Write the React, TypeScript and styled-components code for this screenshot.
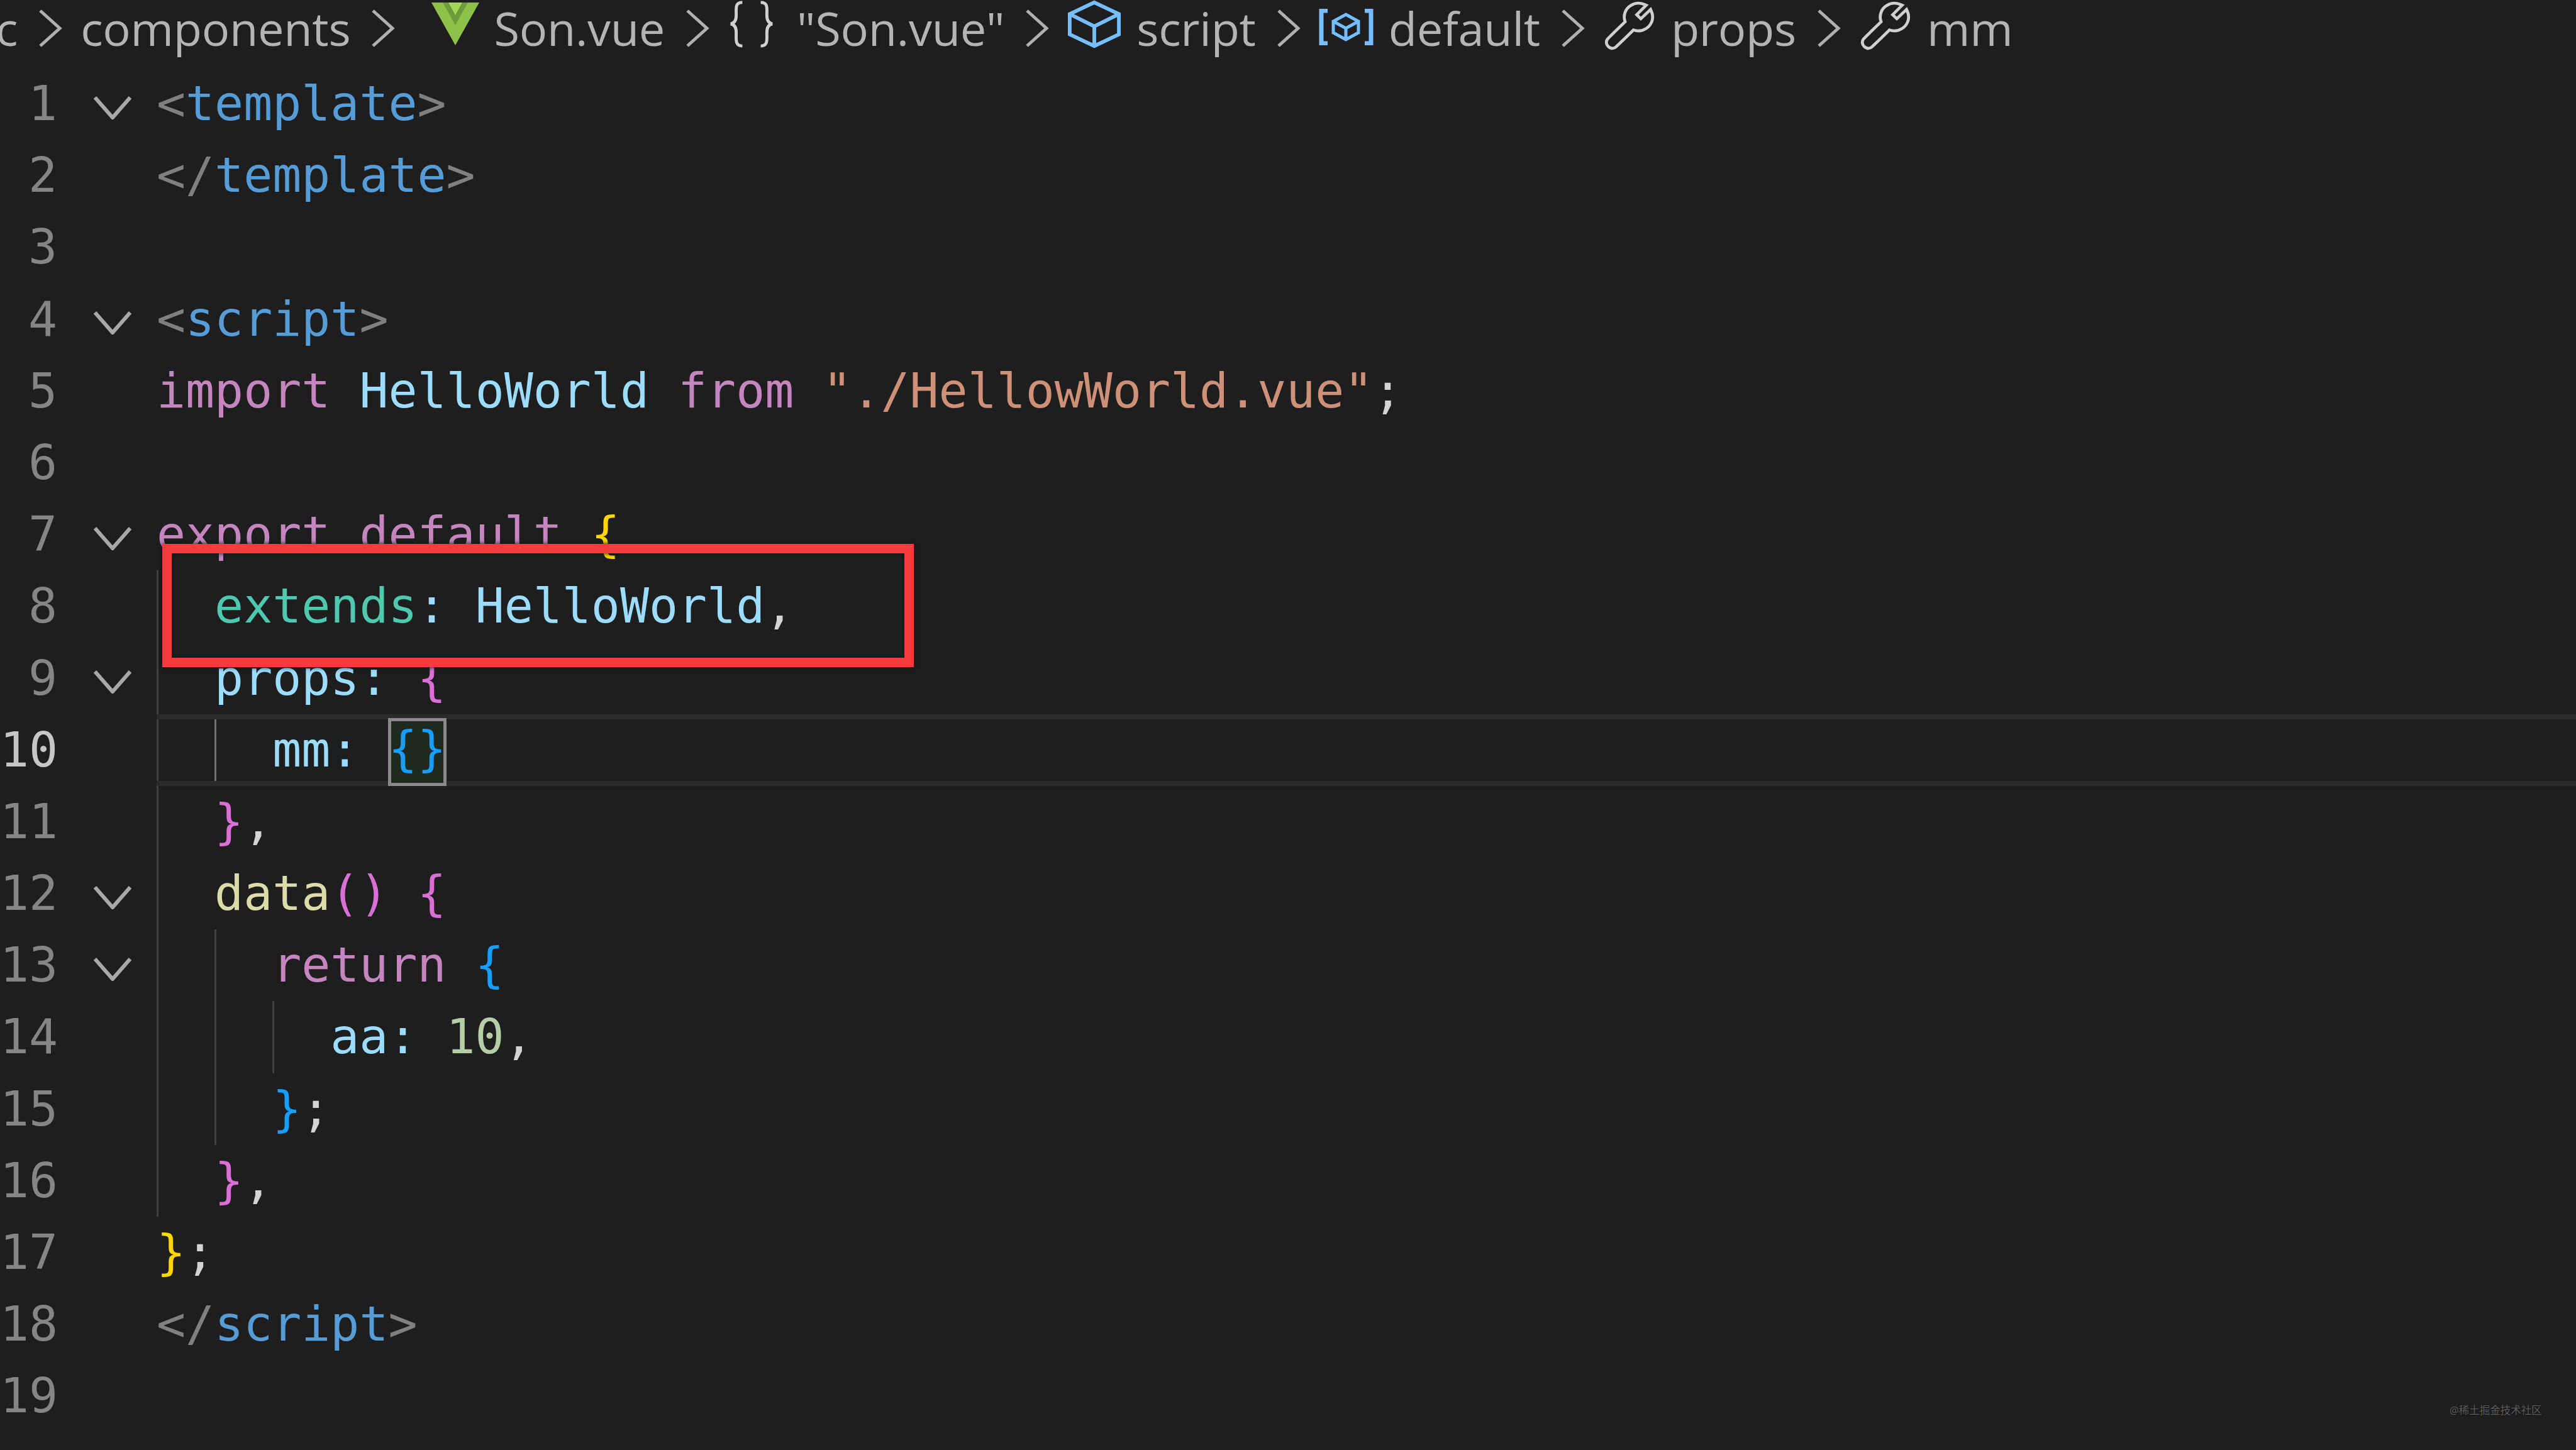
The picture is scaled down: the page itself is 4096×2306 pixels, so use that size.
import React from 'react';
import styled, { createGlobalStyle } from 'styled-components';

const GlobalStyle = createGlobalStyle`
  html, body {
    margin: 0;
    padding: 0;
    background: #1e1e1e;
  }
`;

type Token = { text: string; color: string };

type Line = {
  guides?: number;
  fold?: boolean;
  active?: boolean;
  tokens: Token[];
};

const PUNCT = '#808080';
const TAG = '#569cd6';
const KEYWORD = '#c586c0';
const VARIABLE = '#9cdcfe';
const PLAIN = '#d4d4d4';
const YELLOW = '#ffd700';
const PINK = '#da70d6';
const BLUE = '#179fff';

const t = (text: string, color: string): Token => ({ text, color });

const LINES: Line[] = [
  { fold: true, tokens: [t('<', PUNCT), t('template', TAG), t('>', PUNCT)] },
  { tokens: [t('</', PUNCT), t('template', TAG), t('>', PUNCT)] },
  { tokens: [] },
  { fold: true, tokens: [t('<', PUNCT), t('script', TAG), t('>', PUNCT)] },
  {
    tokens: [
      t('import ', KEYWORD),
      t('HelloWorld ', VARIABLE),
      t('from ', KEYWORD),
      t('"./HellowWorld.vue"', '#ce9178'),
      t(';', PLAIN),
    ],
  },
  { tokens: [] },
  { fold: true, tokens: [t('export default ', KEYWORD), t('{', YELLOW)] },
  { guides: 1, tokens: [t('extends', '#4ec9b0'), t(': ', VARIABLE), t('HelloWorld', VARIABLE), t(',', PLAIN)] },
  { guides: 1, fold: true, tokens: [t('props', VARIABLE), t(': ', VARIABLE), t('{', PINK)] },
  { guides: 2, active: true, tokens: [t('mm', VARIABLE), t(': ', VARIABLE)] },
  { guides: 1, tokens: [t('}', PINK), t(',', PLAIN)] },
  { guides: 1, fold: true, tokens: [t('data', '#dcdcaa'), t('() ', PINK), t('{', PINK)] },
  { guides: 2, fold: true, tokens: [t('return ', KEYWORD), t('{', BLUE)] },
  { guides: 3, tokens: [t('aa', VARIABLE), t(': ', VARIABLE), t('10', '#b5cea8'), t(',', PLAIN)] },
  { guides: 2, tokens: [t('}', BLUE), t(';', PLAIN)] },
  { guides: 1, tokens: [t('}', PINK), t(',', PLAIN)] },
  { tokens: [t('}', YELLOW), t(';', PLAIN)] },
  { tokens: [t('</', PUNCT), t('script', TAG), t('>', PUNCT)] },
  { tokens: [] },
];

const Separator = () => (
  <SeparatorIcon viewBox="0 0 40 60">
    <path d="M4 2 L35 30 L4 58" fill="none" stroke="#b0b0b0" strokeWidth="5" />
  </SeparatorIcon>
);

const VueLogo = () => (
  <VueIcon viewBox="0 0 76 68" preserveAspectRatio="none">
    <path d="M0 0 H76 L38 68 Z" fill="#8dc149" />
    <path d="M18 0 H58 L38 36 Z" fill="#6d9a3a" />
    <path d="M27 0 H49 L38 20 Z" fill="#a4d65c" />
  </VueIcon>
);

const BracesIcon = () => (
  <CrumbIcon $width={76} $height={77} $lift={13} $gap={34} viewBox="0 0 78 77">
    <path
      d="M24 3 C12 3 14 12 14 24 C14 33 11 37 5 38 C11 39 14 43 14 52 C14 64 12 74 24 74 M54 3 C66 3 64 12 64 24 C64 33 67 37 73 38 C67 39 64 43 64 52 C64 64 66 74 54 74"
      fill="none"
      stroke="#d0d0d0"
      strokeWidth="5"
    />
  </CrumbIcon>
);

const CubeIcon = () => (
  <CrumbIcon $width={86} $height={77} $lift={13} $gap={24} viewBox="0 0 88 77">
    <path
      d="M44 3 L84 22 V55 L44 74 L4 55 V22 Z M4 22 L44 42 L84 22 M44 42 V74"
      fill="none"
      stroke="#75beff"
      strokeWidth="6"
    />
  </CrumbIcon>
);

const VariableIcon = () => (
  <CrumbIcon $width={87} $height={58} $lift={4} $gap={24} viewBox="0 0 87 58">
    <path d="M14 3 H4 V55 H14 M73 3 H83 V55 H73" fill="none" stroke="#75beff" strokeWidth="7" />
    <path d="M43 9 L63 20 V38 L43 49 L23 38 V20 Z M23 20 L43 31 L63 20 M43 31 V49" fill="none" stroke="#75beff" strokeWidth="5" />
  </CrumbIcon>
);

const WrenchIcon = () => (
  <CrumbIcon $width={84} $height={82} $lift={8} $gap={24} viewBox="0 0 16 16" preserveAspectRatio="none">
    <path
      d="M2.807 14.975a1.75 1.75 0 0 1-1.255-.556 1.684 1.684 0 0 1-.544-1.1A1.72 1.72 0 0 1 1.36 12.1c1.208-1.27 3.587-3.65 5.318-5.345a4.257 4.257 0 0 1 .048-3.078 4.095 4.095 0 0 1 1.665-1.969 4.259 4.259 0 0 1 4.04-.36l.617.268-2.866 2.951 1.255 1.259 2.944-2.877.267.619a4.295 4.295 0 0 1 .04 3.311 4.198 4.198 0 0 1-.923 1.392 4.27 4.27 0 0 1-.743.581 4.217 4.217 0 0 1-3.812.446c-1.098 1.112-3.84 3.872-5.32 5.254a1.63 1.63 0 0 1-1.09.464z"
      fill="none"
      stroke="#d0d0d0"
      strokeWidth="0.9"
    />
  </CrumbIcon>
);

const Chevron = () => (
  <ChevronIcon viewBox="0 0 62 37">
    <path d="M3 2 L31 34 L59 2" fill="none" stroke="#a8a8a8" strokeWidth="6" />
  </ChevronIcon>
);

const App = () => {
  return (
    <Screen>
      <GlobalStyle />
      <Breadcrumbs>
        <Crumb>c</Crumb>
        <Separator />
        <Crumb>components</Crumb>
        <Separator />
        <VueLogo />
        <Crumb>Son.vue</Crumb>
        <Separator />
        <BracesIcon />
        <Crumb>"Son.vue"</Crumb>
        <Separator />
        <CubeIcon />
        <Crumb>script</Crumb>
        <Separator />
        <VariableIcon />
        <Crumb>default</Crumb>
        <Separator />
        <WrenchIcon />
        <Crumb>props</Crumb>
        <Separator />
        <WrenchIcon />
        <Crumb>mm</Crumb>
      </Breadcrumbs>
      <Editor>
        {LINES.map((line, i) => (
          <Row key={i}>
            <LineNumber $active={!!line.active}>{i + 1}</LineNumber>
            <FoldSlot>{line.fold && <Chevron />}</FoldSlot>
            <Code $active={!!line.active}>
              {Array.from({ length: line.guides ?? 0 }).map((_, g) => (
                <Guide key={g} $bright={!!line.active && g === 1} />
              ))}
              <CodeText>
                {line.tokens.map((token, k) => (
                  <Tok key={k} $color={token.color}>
                    {token.text}
                  </Tok>
                ))}
                {line.active && <MatchedBraces>{'{}'}</MatchedBraces>}
              </CodeText>
            </Code>
          </Row>
        ))}
      </Editor>
      <RedBox />
      <Watermark>@稀土掘金技术社区</Watermark>
    </Screen>
  );
};

export default App;

const Screen = styled.div`
  position: relative;
  width: 4096px;
  height: 2306px;
  overflow: hidden;
  background: #1e1e1e;
`;

const Breadcrumbs = styled.div`
  display: flex;
  align-items: center;
  height: 90px;
  margin-left: -7px;
  padding-bottom: 18px;
  font-family: 'Open Sans', 'Noto Sans', sans-serif;
  font-size: 74px;
  color: #b4b4b4;
`;

const Crumb = styled.span`
  line-height: 90px;
  white-space: pre;
  letter-spacing: -0.3px;
`;

const SeparatorIcon = styled.svg`
  flex: none;
  width: 40px;
  height: 60px;
  margin: 0 28px 0 32px;
`;

const VueIcon = styled.svg`
  flex: none;
  width: 76px;
  height: 68px;
  margin: -14px 23px 0 29px;
`;

const CrumbIcon = styled.svg<{ $width: number; $height: number; $lift: number; $gap: number }>`
  flex: none;
  width: ${(p) => p.$width}px;
  height: ${(p) => p.$height}px;
  margin-top: ${(p) => -p.$lift}px;
  margin-right: ${(p) => p.$gap}px;
`;

const Editor = styled.div`
  display: flex;
  flex-direction: column;
`;

const Row = styled.div`
  display: flex;
  height: 114.2px;
  font-family: 'DejaVu Sans Mono', 'Liberation Mono', monospace;
  font-size: 76.5px;
  line-height: 114.2px;
`;

const LineNumber = styled.div<{ $active: boolean }>`
  flex: none;
  width: 91px;
  text-align: right;
  color: ${(p) => (p.$active ? '#c6c6c6' : '#858585')};
`;

const FoldSlot = styled.div`
  flex: none;
  width: 140px;
  margin-left: 18px;
  display: flex;
  align-items: center;
  justify-content: center;
`;

const ChevronIcon = styled.svg`
  width: 62px;
  height: 37px;
  margin-top: 12px;
`;

const Code = styled.div<{ $active: boolean }>`
  flex: 1;
  display: flex;
  box-sizing: border-box;
  white-space: pre;
  ${(p) =>
    p.$active &&
    `
    border-top: 8px solid #2b2b2b;
    border-bottom: 8px solid #2b2b2b;
    line-height: 98px;
  `}
`;

const Guide = styled.span<{ $bright: boolean }>`
  flex: none;
  box-sizing: border-box;
  width: 92.1px;
  border-left: 3px solid ${(p) => (p.$bright ? '#707070' : '#404040')};
`;

const CodeText = styled.span`
  display: block;
`;

const Tok = styled.span<{ $color: string }>`
  color: ${(p) => p.$color};
`;

const MatchedBraces = styled.span`
  display: inline-block;
  box-sizing: border-box;
  height: 108px;
  line-height: 98px;
  margin-top: -2px;
  vertical-align: top;
  color: ${BLUE};
  background: #1e2a1e;
  outline: 5px solid #8a8a8a;
  outline-offset: -5px;
`;

const RedBox = styled.div`
  position: absolute;
  left: 258px;
  top: 865px;
  width: 1195px;
  height: 196px;
  box-sizing: border-box;
  border: 15px solid #f43c3c;
  box-shadow: 0 0 7px #0c1616, inset 0 0 7px #0c1616;
`;

const Watermark = styled.div`
  position: absolute;
  left: 3895px;
  top: 2230px;
  font-family: 'Noto Sans', 'Noto Sans CJK SC', sans-serif;
  font-size: 16.5px;
  color: #5c5c5c;
  text-shadow: 1px 1px 1px #111;
`;
